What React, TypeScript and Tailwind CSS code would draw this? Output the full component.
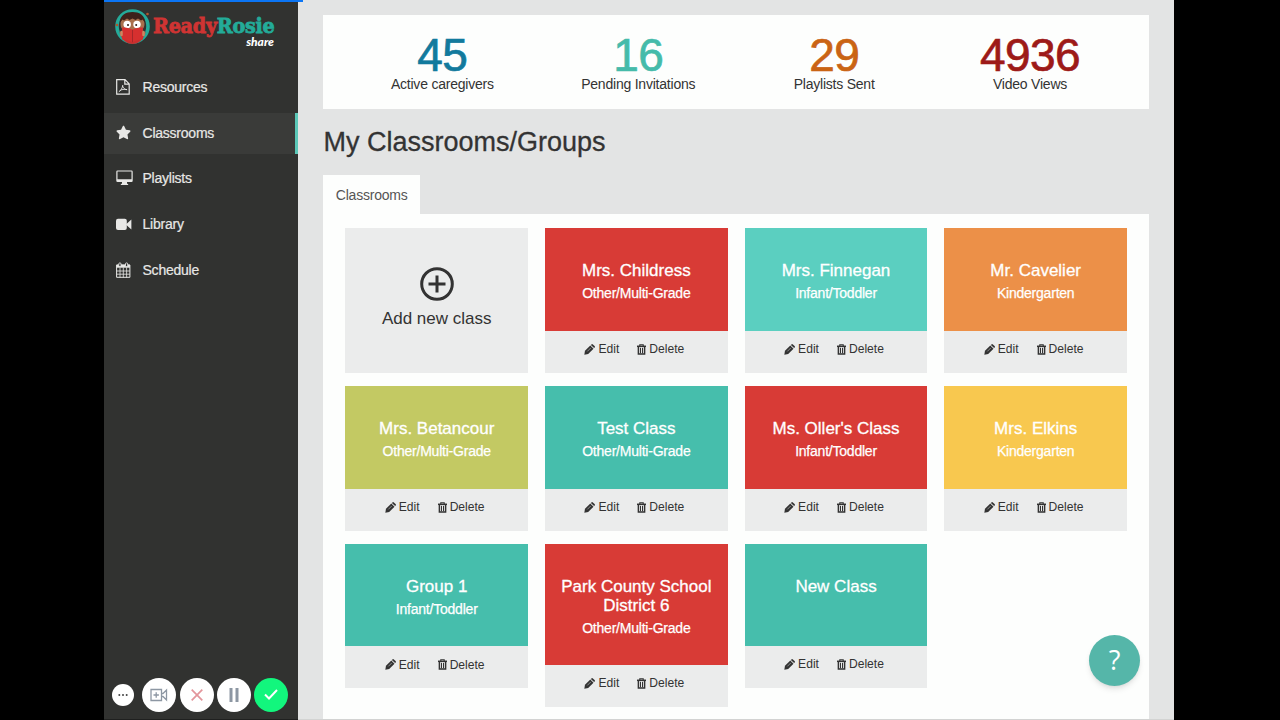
import React from 'react';
import { FaStar } from 'react-icons/fa';

const stats = [
  { value: '45', label: 'Active caregivers', color: 'text-[#127a9d]' },
  { value: '16', label: 'Pending Invitations', color: 'text-[#45bbaa]' },
  { value: '29', label: 'Playlists Sent', color: 'text-[#ca6414]' },
  { value: '4936', label: 'Video Views', color: 'text-[#9d1a18]' },
];

const classes = [
  { name: 'Mrs. Childress', grade: 'Other/Multi-Grade', color: 'bg-[#d83b36]' },
  { name: 'Mrs. Finnegan', grade: 'Infant/Toddler', color: 'bg-[#5bcfc0]' },
  { name: 'Mr. Cavelier', grade: 'Kindergarten', color: 'bg-[#ec9048]' },
  { name: 'Mrs. Betancour', grade: 'Other/Multi-Grade', color: 'bg-[#c3c963]' },
  { name: 'Test Class', grade: 'Other/Multi-Grade', color: 'bg-[#46beac]' },
  { name: "Ms. Oller's Class", grade: 'Infant/Toddler', color: 'bg-[#d83b36]' },
  { name: 'Mrs. Elkins', grade: 'Kindergarten', color: 'bg-[#f8c84f]' },
  { name: 'Group 1', grade: 'Infant/Toddler', color: 'bg-[#46beac]' },
  { name: 'Park County School District 6', grade: 'Other/Multi-Grade', color: 'bg-[#d83b36]' },
  { name: 'New Class', grade: '', color: 'bg-[#46beac]' },
];

const PdfIcon = () => (
  <svg width="14" height="16" viewBox="0 0 14 16" fill="none" stroke="currentColor" strokeWidth="1.2">
    <path d="M0.7 0.7h8.3l4.2 4.2v10.3H0.7zM8.8 0.7v4.4h4.4" />
    <path
      d="M2.8 12.8c1.8-0.8 3.6-3.6 3.9-6.3M6.6 6.2c0 2.5 1.7 4.3 4.6 4.6M3.8 11.5c2-1 4.2-1.4 7.2-1"
      strokeWidth="0.9"
    />
  </svg>
);

const DesktopIcon = () => (
  <svg width="17" height="16" viewBox="0 0 17 16" fill="currentColor">
    <path
      fillRule="evenodd"
      d="M1.5 0.5h14a1.2 1.2 0 0 1 1.2 1.2v9.1a1.2 1.2 0 0 1-1.2 1.2h-4.5v1.6l1.2 0.6v0.8h-7.4v-0.8l1.2-0.6V12H1.5A1.2 1.2 0 0 1 0.3 10.8V1.7A1.2 1.2 0 0 1 1.5 0.5zM1.5 1.6v7.6h14V1.6z"
    />
  </svg>
);

const VideoIcon = () => (
  <svg width="16" height="13" viewBox="0 0 16 13" fill="currentColor">
    <rect x="0" y="0.7" width="10.8" height="11.4" rx="2" />
    <path d="M9.8 6.4L15.4 1.4v10z" />
  </svg>
);

const CalendarIcon = () => (
  <svg width="15" height="16" viewBox="0 0 15 16" fill="none" stroke="currentColor">
    <path d="M0.6 3h13.3v12.3H0.6z" />
    <path d="M0.6 4.2h13.3" strokeWidth="3" />
    <path d="M4 5.5v10M7.3 5.5v10M10.6 5.5v10M0.6 9h13.3M0.6 12.2h13.3" strokeWidth="0.8" />
    <rect x="2.8" y="0.9" width="2.2" height="3.7" rx="1" fill="#313230" strokeWidth="0.9" />
    <rect x="9.5" y="0.9" width="2.2" height="3.7" rx="1" fill="#313230" strokeWidth="0.9" />
  </svg>
);

const PencilIcon = () => (
  <svg width="11" height="11" viewBox="0 0 11 11" fill="currentColor">
    <path d="M0.3 10.7l0.7-3.9 5.3-5.3 3.2 3.2-5.3 5.3z" />
    <path d="M6.9 0.9l0.5-0.5a1.1 1.1 0 0 1 1.5 0l1.7 1.7a1.1 1.1 0 0 1 0 1.5l-0.5 0.5z" />
    <path d="M3.3 7.4l3.5-3.5" stroke="#ebecec" strokeWidth="0.5" />
  </svg>
);

const TrashIcon = () => (
  <svg width="9" height="11" viewBox="0 0 9 11" fill="none" stroke="currentColor">
    <path d="M0 2.3h9" strokeWidth="1.5" />
    <path d="M2.8 2V0.7h3.4V2" strokeWidth="1.1" />
    <path d="M1.4 2.5v7.5h6.2V2.5" strokeWidth="1.5" />
    <path d="M3.5 3.8v5.5M5.5 3.8v5.5" />
  </svg>
);

const Logo = () => (
  <div className="flex h-[44px] items-start">
    <svg className="shrink-0" width="41" height="40" viewBox="0 0 41 40">
      <circle cx="20.5" cy="18.5" r="15.5" fill="#313230" stroke="#25aa99" strokeWidth="3.6" />
      <path d="M7.5 24c2 8 7 12 13 12s11-4 13-12z" fill="#c92f2f" />
      <ellipse cx="20.5" cy="16" rx="12" ry="10" fill="#a96f4c" />
      <path d="M7.5 15C8 7 14 4 20.5 4S33 7 33.5 15l-3-3.5-1.5 1-3-2-2.5 1.5-3-1.5-3 1.5-2.5-1.5-3 2-1.5-1z" fill="#3d211a" />
      <circle cx="15.2" cy="16.5" r="3.7" fill="#fff" />
      <circle cx="25" cy="16.5" r="3.7" fill="#fff" />
      <circle cx="16" cy="17" r="1" fill="#2b1a15" />
      <circle cx="24.2" cy="17" r="1" fill="#2b1a15" />
      <path d="M10 19.5c4 0 8 0.5 10.5 2.3 2.5-1.8 6.5-2.3 10.5-2.3v12c-4 0-8 1-10.5 3-2.5-2-6.5-3-10.5-3z" fill="#d6302f" />
      <path d="M20.5 21.8v12.5" stroke="#a52729" />
      <path d="M9.5 24v3M31.5 24v3" stroke="#c98a62" strokeWidth="2.5" strokeLinecap="round" />
      <circle cx="5" cy="17" r="1.3" fill="#b3552c" />
      <circle cx="35.5" cy="6" r="1.3" fill="#b3552c" />
    </svg>
    <div className="flex w-[121px] flex-col pt-[9px]">
      <div className="flex h-[19px] items-center font-['DejaVu_Serif',serif] text-[20px] leading-[19px] font-bold">
        <div className="flex w-[121px] origin-left scale-x-[0.96] tracking-[-0.3px] whitespace-nowrap [-webkit-text-stroke:0.8px_currentColor]">
          <span className="text-[#cf3433]">Ready</span>
          <span className="text-[#23ab99]">Rosie</span>
        </div>
      </div>
      <span className="self-end font-[Lato,sans-serif] text-[12px] leading-[12px] font-black text-white italic">share</span>
    </div>
  </div>
);

const menu = [
  { label: 'Resources', icon: <PdfIcon /> },
  { label: 'Classrooms', icon: <FaStar className="size-[15px]" />, active: true },
  { label: 'Playlists', icon: <DesktopIcon /> },
  { label: 'Library', icon: <VideoIcon /> },
  { label: 'Schedule', icon: <CalendarIcon /> },
];

const Sidebar = () => (
  <aside className="flex h-full w-[194px] shrink-0 flex-col bg-[#313230] text-[#e8e8e6]">
    <div className="h-[67px] pt-[8px] pl-[8px]">
      <Logo />
    </div>
    <nav className="flex flex-col gap-[4.7px] text-[14px] tracking-[-0.23px] [-webkit-text-stroke:0.2px_currentColor]">
      {menu.map((item) => (
        <a
          key={item.label}
          className={`flex h-[41px] items-center border-r-[3px] pl-[12px] ${
            item.active ? 'border-[#5bc8b8] bg-[#3a3b39]' : 'border-transparent'
          }`}
        >
          <span className="flex w-[26.5px] items-center pb-px">{item.icon}</span>
          {item.label}
        </a>
      ))}
    </nav>

    {/* Recorder controls */}
    <div className="mt-auto mb-[7.5px] flex items-center gap-[3.3px] pl-[8px]">
      <button className="mr-[5px] flex size-[22px] items-center justify-center rounded-full bg-white">
        <svg width="12" height="4" viewBox="0 0 12 4" fill="#444">
          <circle cx="2.3" cy="2" r="1" />
          <circle cx="6" cy="2" r="1" />
          <circle cx="9.7" cy="2" r="1" />
        </svg>
      </button>
      <button className="flex size-[34px] items-center justify-center rounded-full bg-white">
        <svg width="18" height="14" viewBox="0 0 18 14" fill="none" stroke="#8d97a3" strokeWidth="1.3">
          <path d="M1 1.5h10.5v11H1zM11.5 5.5h1.5L16.5 2v10L13 8.5h-1.5M6.2 4.3v5.4M3.5 7h5.4" />
        </svg>
      </button>
      <button className="flex size-[34px] items-center justify-center rounded-full bg-white">
        <svg width="12" height="12" viewBox="0 0 12 12" stroke="#e3959b" strokeWidth="1.7">
          <path d="M0.7 0.7l10.6 10.6M11.3 0.7L0.7 11.3" />
        </svg>
      </button>
      <button className="flex size-[34px] items-center justify-center rounded-full bg-white">
        <svg width="10" height="14" viewBox="0 0 10 14" fill="#8d97a3">
          <rect x="0.5" width="3" height="14" />
          <rect x="6.5" width="3" height="14" />
        </svg>
      </button>
      <button className="flex size-[34px] items-center justify-center rounded-full bg-[#12f67d]">
        <svg width="14" height="11" viewBox="0 0 14 11" fill="none" stroke="#fff" strokeWidth="2">
          <path d="M1 5.5l4 4L13 1" />
        </svg>
      </button>
    </div>
  </aside>
);

const ClassCard = ({ name, grade, color }: any) => (
  <div className="bg-[#ebecec] text-center">
    <div className={`${color} px-[12px] pt-[34px] pb-[29px] text-white ${grade ? '' : 'h-[101.5px]'}`}>
      <h3 className="text-[17px] leading-[18.7px] [-webkit-text-stroke:0.3px_white]">{name}</h3>
      {grade && (
        <p className="mt-[5px] text-[14px] leading-[15.5px] tracking-[-0.22px] [-webkit-text-stroke:0.25px_white]">{grade}</p>
      )}
    </div>
    <div className="flex h-[42px] items-center justify-center gap-[18px] pr-[4px] pb-[5px] text-[12.1px] text-[#333]">
      <span className="flex items-center gap-[3px]">
        <PencilIcon />
        Edit
      </span>
      <span className="flex items-center gap-[3px]">
        <TrashIcon />
        Delete
      </span>
    </div>
  </div>
);

const App = () => {
  return (
    <div className="relative h-screen w-screen overflow-hidden bg-black px-[104px] font-['Liberation_Sans',Arial,sans-serif]">
      <div className="flex h-[719px] w-[1070px] bg-[#e3e4e4]">
        <Sidebar />

        <main className="flex flex-1 flex-col pt-[15px] pr-[25px] pl-[25.4px] text-[#333]">
          {/* Stats */}
          <section className="grid h-[94px] shrink-0 grid-cols-4 bg-[#fdfefd] px-[21px] pt-[15px] text-center">
            {stats.map((stat) => (
              <div key={stat.label}>
                <div className={`text-[46px] leading-[50px] tracking-[-0.6px] ${stat.color} [-webkit-text-stroke:0.7px_currentColor]`}>
                  {stat.value}
                </div>
                <div className="-mt-[4px] text-[14px] leading-[16px] tracking-[-0.22px]">{stat.label}</div>
              </div>
            ))}
          </section>

          <h1 className="mt-[16px] text-[27px] leading-[34px] [-webkit-text-stroke:0.3px_currentColor]">My Classrooms/Groups</h1>

          {/* Tabs */}
          <div className="mt-[16px] flex">
            <div className="flex h-[39.4px] w-[96.5px] items-center justify-center bg-[#fdfefd] pt-px text-[14px] tracking-[-0.22px] text-[#555]">
              Classrooms
            </div>
          </div>

          <section className="flex-1 bg-[#fdfefd] px-[22px] pt-[14px]">
            <div className="grid grid-cols-4 items-start gap-x-[17px] gap-y-[13.5px]">
              <div className="flex h-[144.5px] flex-col items-center bg-[#ebecec] pt-[39px]">
                <svg width="34" height="34" viewBox="0 0 34 34" fill="none" stroke="#333" strokeWidth="3">
                  <circle cx="17" cy="17" r="15.3" />
                  <path d="M17 8.5v17M8.5 17h17" />
                </svg>
                <span className="mt-[8px] text-[17px] leading-[20px]">Add new class</span>
              </div>
              {classes.map((item) => (
                <ClassCard key={item.name} {...item} />
              ))}
            </div>
          </section>
        </main>
      </div>

      {/* Window edge under the page */}
      <div className="flex h-px w-[1070px]">
        <div className="w-[194px] bg-[#1f201f]" />
        <div className="flex-1 bg-[#d2d3d2]" />
      </div>

      {/* Page loading bar */}
      <div className="absolute top-0 left-[104px] h-[2px] w-[199px] bg-[#0b75f5]" />

      {/* Help button */}
      <button className="absolute top-[635px] left-[1089px] flex size-[51px] items-center justify-center rounded-full bg-[#55b6a9] font-['Open_Sans',sans-serif] text-[27px] text-white shadow-md">
        ?
      </button>
    </div>
  );
};

export default App;
